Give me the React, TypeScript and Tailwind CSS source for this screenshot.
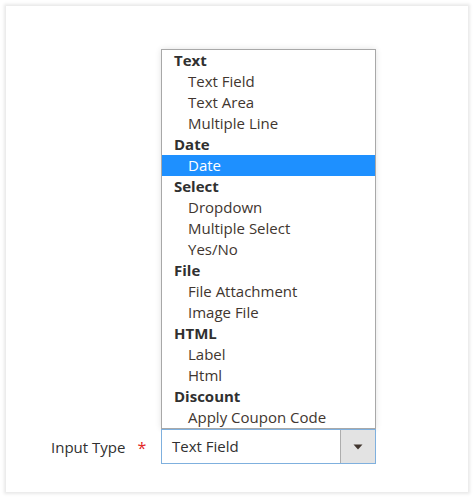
import React from 'react';

type Group = { label: string; options: string[] };

const groups: Group[] = [
  { label: 'Text', options: ['Text Field', 'Text Area', 'Multiple Line'] },
  { label: 'Date', options: ['Date'] },
  { label: 'Select', options: ['Dropdown', 'Multiple Select', 'Yes/No'] },
  { label: 'File', options: ['File Attachment', 'Image File'] },
  { label: 'HTML', options: ['Label', 'Html'] },
  { label: 'Discount', options: ['Apply Coupon Code'] },
];

const highlighted = 'Date';

const App: React.FC = () => {
  return (
    <div
      className="w-[474px] h-[499px] bg-white pt-[6px] pl-[6px] pr-[6px] pb-[7px]"
      style={{ fontFamily: '"Open Sans", "Noto Sans", Arial, sans-serif' }}
    >
      <div className="h-full bg-white shadow-[0_0_3px_2px_rgba(0,0,0,0.09)] pt-[43px]">
        <div className="flex items-end">
          {/* Label */}
          <div className="w-[155px] h-[35px] flex items-center pl-[45px]">
            <span className="text-[15px] leading-[20px] text-[#303030]">Input Type</span>
            <span className="ml-[12px] text-[16px] leading-[20px] text-[#e22626] mt-[3px]">*</span>
          </div>

          {/* Select with open list */}
          <div className="w-[215px] flex flex-col">
            <div className="border border-[#a8a8a8] bg-white shadow-[0_0_6px_rgba(0,0,0,0.12)]">
              {groups.map((g) => (
                <div key={g.label}>
                  <div className="h-[21px] pl-[12px] text-[15px] leading-[20px] font-bold text-[#303030]">
                    {g.label}
                  </div>
                  {g.options.map((o) => (
                    <div
                      key={o}
                      className={
                        o === highlighted && g.label === 'Date'
                          ? 'h-[21px] pl-[26px] text-[15px] leading-[20px] bg-[#1e90ff] text-white'
                          : 'h-[21px] pl-[26px] text-[15px] leading-[20px] text-[#41362f]'
                      }
                    >
                      {o}
                    </div>
                  ))}
                </div>
              ))}
            </div>
            <div className="h-[35px] flex border border-[#7fb0de] bg-white">
              <div className="flex-1 flex items-center pl-[10px] text-[15px] text-[#303030]">
                Text Field
              </div>
              <div className="w-[35px] flex items-center justify-center bg-[#e3e3e3] border-l border-[#adadad]">
                <svg width="10" height="6" viewBox="0 0 10 6">
                  <path d="M0.5 0.5 L9.5 0.5 L5 5.5 Z" fill="#41362f" />
                </svg>
              </div>
            </div>
          </div>
        </div>
      </div>
    </div>
  );
};

export default App;
